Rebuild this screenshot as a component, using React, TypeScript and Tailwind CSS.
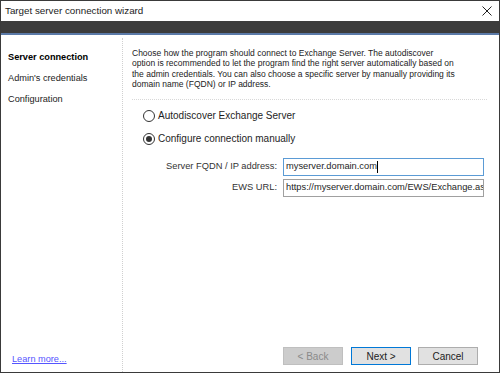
import React from "react";

const steps = [
  { label: "Server connection", active: true },
  { label: "Admin's credentials", active: false },
  { label: "Configuration", active: false },
];

const intro = [
  "Choose how the program should connect to Exchange Server. The autodiscover",
  "option is recommended to let the program find the right server automatically based on",
  "the admin credentials. You can also choose a specific server by manually providing its",
  "domain name (FQDN) or IP address.",
];

function Radio({ checked, label }: { checked: boolean; label: string }) {
  return (
    <label className="flex items-center gap-[3px] h-[13px]">
      <span className="w-[12px] h-[12px] rounded-full border border-[#333] bg-white flex items-center justify-center">
        {checked && <span className="w-[6px] h-[6px] rounded-full bg-[#333]" />}
      </span>
      <span>{label}</span>
    </label>
  );
}

function Field({ label, value, focused }: { label: string; value: string; focused?: boolean }) {
  return (
    <div className="flex items-center h-[18px] text-[9.3px]">
      <span className="w-[151px] text-right pr-[6px] text-[#333]">{label}</span>
      <div
        className={
          focused
            ? "w-[201px] h-[18px] border border-[#5b9bd5] bg-white flex items-center px-[2px] overflow-hidden whitespace-nowrap"
            : "w-[201px] h-[18px] border border-[#a0a0a0] bg-white flex items-center px-[2px] overflow-hidden whitespace-nowrap"
        }
      >
        {value}
        {focused && <span className="w-px h-[12px] bg-black" />}
      </div>
    </div>
  );
}

export default function App() {
  return (
    <div
      className="w-[500px] h-[373px] flex flex-col bg-white border border-[#3a3a3a] text-[10px] text-[#1e1e1e]"
      style={{ fontFamily: '"Liberation Sans", Arial, sans-serif' }}
    >
      <div className="h-[20px] flex items-center justify-between pl-[4px] pr-[7px] text-[9.8px] text-[#222]">
        <span>Target server connection wizard</span>
        <svg width="10" height="10" viewBox="0 0 10 10">
          <path d="M0.5 0.5 L9.5 9.5 M9.5 0.5 L0.5 9.5" stroke="#222" strokeWidth="1" />
        </svg>
      </div>
      <div className="h-[12px] bg-[#3c3c3c]" />
      <div className="h-[2px] bg-[#5b7aa8]" />
      <div className="flex-1 flex">
        <div className="w-[122px] flex flex-col justify-between border-r border-dotted border-[#d0d0d0] pl-[7px] pt-[13px] pb-[5px] mt-[3px] text-[9.2px]">
          <div className="flex flex-col gap-[9px]">
            {steps.map((s) => (
              <div key={s.label} className={s.active ? "font-bold text-black h-[12px]" : "h-[12px] text-[#222]"}>
                {s.label}
              </div>
            ))}
          </div>
          <a className="ml-[4px] text-[#5555ff] underline">Learn more...</a>
        </div>
        <div className="flex-1 flex flex-col pl-[9px] pr-[9px] pt-[13px]">
          <div className="leading-[10.3px] text-[8.5px] text-[#222] whitespace-nowrap">
            {intro.map((line) => (
              <div key={line}>{line}</div>
            ))}
          </div>
          <div className="mt-[10px] mr-[3px] border-t border-dotted border-[#d8d8d8]" />
          <div className="flex flex-col gap-[10px] pl-[11px] mt-[9px]">
            <Radio checked={false} label="Autodiscover Exchange Server" />
            <Radio checked={true} label="Configure connection manually" />
          </div>
          <div className="flex flex-col gap-[3px] mt-[13px]">
            <Field label="Server FQDN / IP address:" value="myserver.domain.com" focused />
            <Field label="EWS URL:" value="https://myserver.domain.com/EWS/Exchange.asmx" />
          </div>
          <div className="mt-auto mb-[7px] flex ml-[151px]">
            <button className="w-[60px] h-[18px] bg-[#cccccc] border border-[#bfbfbf] text-[#8a8a8a]">&lt; Back</button>
            <button className="ml-[8px] w-[60px] h-[18px] bg-[#e1e1e1] border border-[#0078d7] text-[#222]">Next &gt;</button>
            <button className="ml-[7px] w-[60px] h-[18px] bg-[#e1e1e1] border border-[#adadad] text-[#222]">Cancel</button>
          </div>
        </div>
      </div>
    </div>
  );
}
